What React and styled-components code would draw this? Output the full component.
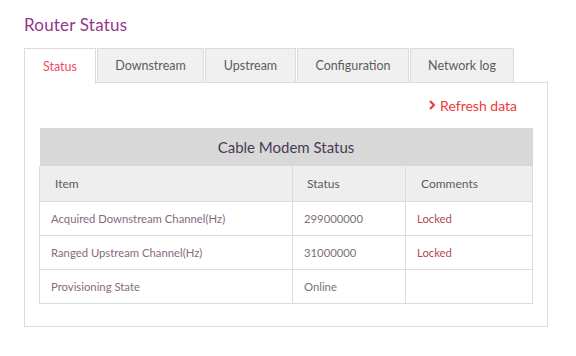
import React from "react";
import styled, { createGlobalStyle } from "styled-components";

const GlobalStyle = createGlobalStyle`
    body {
        margin: 0;
        background: #fff;
        font-family: Lato, "Open Sans", sans-serif;
    }
`;

const Page = styled.div`
    padding: 13px 28px 0 24px;
    width: 524px;
`;

const Title = styled.h1`
    margin: 0 0 12px;
    font-size: 17px;
    font-weight: 400;
    line-height: 23px;
    letter-spacing: 0.2px;
    color: #94378b;
`;

const TabBar = styled.div`
    display: flex;
    height: 35px;
    position: relative;
    z-index: 1;
`;

const Tab = styled.div`
    box-sizing: border-box;
    width: ${(p) => p.$width}px;
    height: ${(p) => (p.$active ? 36 : 35)}px;
    margin-right: 1px;
    display: flex;
    align-items: center;
    justify-content: center;
    font-size: 12.5px;
    border: 1px solid #dcdcdc;
    border-bottom: ${(p) => (p.$active ? "none" : "1px solid #dcdcdc")};
    background: ${(p) => (p.$active ? "#fff" : "#f0f0f0")};
    color: ${(p) => (p.$active ? "#f04a66" : "#5c5c5c")};
`;

const Panel = styled.div`
    box-sizing: border-box;
    border: 1px solid #dcdcdc;
    margin-top: -1px;
    padding: 11px 15px 22px 14px;
`;

const RefreshRow = styled.div`
    display: flex;
    justify-content: flex-end;
    align-items: center;
    gap: 5px;
    height: 22px;
    padding-right: 15px;
    margin-bottom: 12px;
    font-size: 14px;
    color: #ee3a3a;
`;

const Table = styled.table`
    width: 493px;
    border-collapse: collapse;
    table-layout: fixed;
    font-size: 11.3px;
`;

const Caption = styled.th`
    height: 38px;
    padding: 0;
    background: #d8d8d8;
    font-size: 15px;
    font-weight: 400;
    color: #4a3a55;
    text-align: center;
`;

const HeadCell = styled.th`
    height: 35px;
    padding: 0 0 0 ${(p) => p.$pad}px;
    background: #eeeeee;
    border: 1px solid #dcdcdc;
    border-top: none;
    font-size: 12px;
    font-weight: 400;
    color: #5c5c5c;
    text-align: left;
`;

const Cell = styled.td`
    height: 33px;
    padding: 0 0 0 11px;
    border: 1px solid #dcdcdc;
    color: ${(p) => p.$color || "#7d7078"};
`;

const columns = [
    { label: "Item", width: 253, pad: 15 },
    { label: "Status", width: 113, pad: 14 },
    { label: "Comments", width: 127, pad: 15 },
];

const rows = [
    ["Acquired Downstream Channel(Hz)", "299000000", "Locked"],
    ["Ranged Upstream Channel(Hz)", "31000000", "Locked"],
    ["Provisioning State", "Online", ""],
];

const tabs = [
    { label: "Status", width: 72 },
    { label: "Downstream", width: 107 },
    { label: "Upstream", width: 91 },
    { label: "Configuration", width: 112 },
    { label: "Network log", width: 104 },
];

function Chevron() {
    return (
        <svg width="6" height="10" viewBox="0 0 6 10">
            <path d="M1 1 L5 5 L1 9" fill="none" stroke="#ee3a3a" strokeWidth="2.2" />
        </svg>
    );
}

export default function App() {
    return (
        <Page>
            <GlobalStyle />
            <Title>Router Status</Title>
            <TabBar>
                {tabs.map((t, i) => (
                    <Tab key={t.label} $width={t.width} $active={i === 0}>
                        {t.label}
                    </Tab>
                ))}
            </TabBar>
            <Panel>
                <RefreshRow>
                    <Chevron />
                    Refresh data
                </RefreshRow>
                <Table>
                    <colgroup>
                        {columns.map((c) => (
                            <col key={c.label} style={{ width: c.width }} />
                        ))}
                    </colgroup>
                    <thead>
                        <tr>
                            <Caption colSpan={3}>Cable Modem Status</Caption>
                        </tr>
                        <tr>
                            {columns.map((c) => (
                                <HeadCell key={c.label} $pad={c.pad}>
                                    {c.label}
                                </HeadCell>
                            ))}
                        </tr>
                    </thead>
                    <tbody>
                        {rows.map((r) => (
                            <tr key={r[0]}>
                                <Cell $color="#866a7e">{r[0]}</Cell>
                                <Cell>{r[1]}</Cell>
                                <Cell $color="#b4485a">{r[2]}</Cell>
                            </tr>
                        ))}
                    </tbody>
                </Table>
            </Panel>
        </Page>
    );
}
